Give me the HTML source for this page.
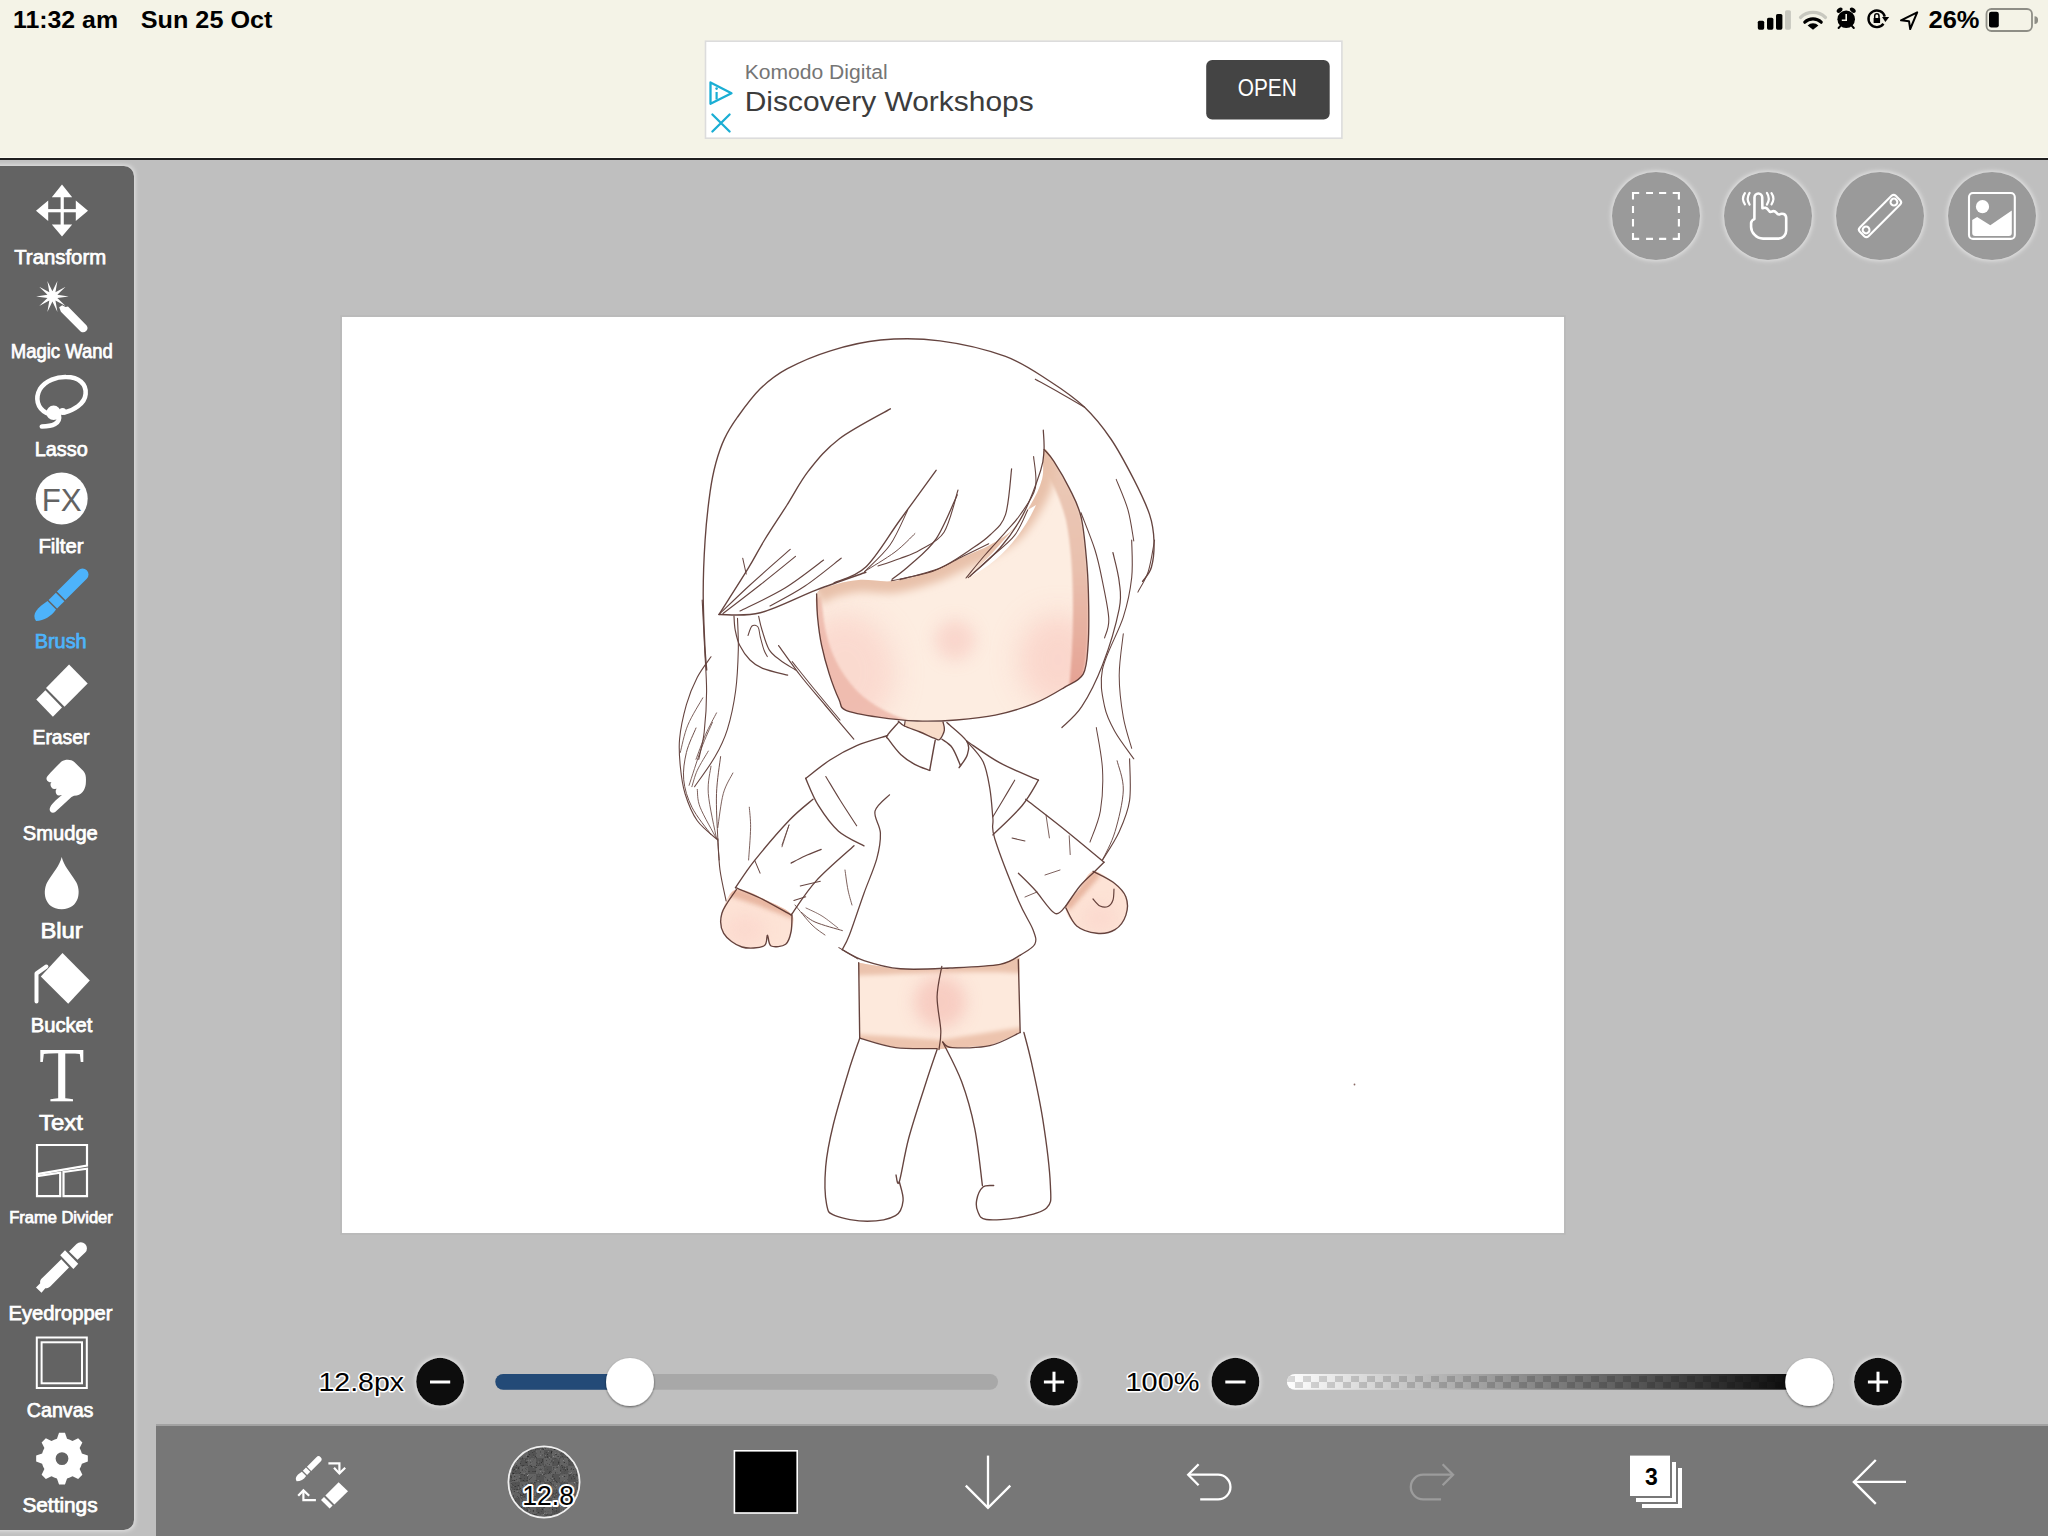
<!DOCTYPE html>
<html><head><meta charset="utf-8">
<style>
html,body{margin:0;padding:0;width:2048px;height:1536px;overflow:hidden;background:#bfbfbf;}
svg{position:absolute;left:0;top:0;display:block;}
svg{font-family:"Liberation Sans",sans-serif;}
</style></head>
<body>
<svg width="2048" height="1536" viewBox="0 0 2048 1536">
<defs>
  <filter id="halo" x="-30%" y="-30%" width="160%" height="160%">
    <feMorphology in="SourceAlpha" operator="dilate" radius="1"/>
    <feGaussianBlur stdDeviation="2"/>
    <feColorMatrix type="matrix" values="0 0 0 0 1  0 0 0 0 1  0 0 0 0 1  0 0 0 0.55 0"/>
    <feMerge><feMergeNode/><feMergeNode in="SourceGraphic"/></feMerge>
  </filter>

  <filter id="tshadow" x="-30%" y="-30%" width="160%" height="160%">
    <feGaussianBlur in="SourceAlpha" stdDeviation="1.2"/>
    <feOffset dx="0" dy="0.5"/>
    <feColorMatrix type="matrix" values="0 0 0 0 0  0 0 0 0 0  0 0 0 0 0  0 0 0 0.55 0"/>
    <feMerge><feMergeNode/><feMergeNode in="SourceGraphic"/></feMerge>
  </filter>
  <pattern id="checker" x="1287" y="1376" width="16" height="12" patternUnits="userSpaceOnUse">
    <rect width="16" height="12" fill="#ffffff"/>
    <rect x="0" y="0" width="8" height="6" fill="#d9d9d9"/>
    <rect x="8" y="6" width="8" height="6" fill="#d9d9d9"/>
  </pattern>
  <linearGradient id="opgrad" gradientUnits="userSpaceOnUse" x1="1287" y1="0" x2="1800" y2="0">
    <stop offset="0" stop-color="#000" stop-opacity="0"/>
    <stop offset="1" stop-color="#000" stop-opacity="0.97"/>
  </linearGradient>
  <filter id="noise" x="0" y="0" width="100%" height="100%">
    <feTurbulence type="fractalNoise" baseFrequency="0.9" numOctaves="2" seed="3"/>
    <feColorMatrix type="matrix" values="0 0 0 0 0.33  0 0 0 0 0.33  0 0 0 0 0.33  0.9 0.9 0.9 0 -1.15"/>
    <feComposite in2="SourceGraphic" operator="in"/>
  </filter>
  <pattern id="bpcheck" x="512" y="1450" width="16" height="16" patternUnits="userSpaceOnUse">
    <rect width="16" height="16" fill="#545454"/>
    <rect x="8" y="0" width="8" height="8" fill="#636363"/>
    <rect x="0" y="8" width="8" height="8" fill="#636363"/>
  </pattern>
  <filter id="noise2" x="0" y="0" width="100%" height="100%" filterUnits="objectBoundingBox">
    <feTurbulence type="fractalNoise" baseFrequency="0.55" numOctaves="2" seed="7" result="t"/>
    <feColorMatrix in="t" type="matrix" values="0 0 0 0 1  0 0 0 0 1  0 0 0 0 1  -3 0 0 0 0.95" result="w"/>
    <feColorMatrix in="t" type="matrix" values="0 0 0 0 0  0 0 0 0 0  0 0 0 0 0  3 0 0 0 -1.75" result="k"/>
    <feMerge><feMergeNode in="k"/><feMergeNode in="w"/></feMerge>
  </filter>
</defs>
<!-- background -->
<rect x="0" y="0" width="2048" height="1536" fill="#bfbfbf"/>
<!-- status bar -->
<rect x="0" y="0" width="2048" height="158" fill="#f4f3e7"/>
<rect x="0" y="157" width="2048" height="1" fill="#fbfaf2"/>
<rect x="0" y="158" width="2048" height="2" fill="#1f1f1f"/>


<!-- ===== STATUS BAR ===== -->
<g font-weight="bold" fill="#000" font-size="24">
  <text x="13" y="28" textLength="105" lengthAdjust="spacingAndGlyphs">11:32 am</text>
  <text x="140.8" y="28" textLength="131.6" lengthAdjust="spacingAndGlyphs">Sun 25 Oct</text>
  <text x="1928.5" y="28" textLength="51" lengthAdjust="spacingAndGlyphs">26%</text>
</g>
<g>
  <rect x="1757.8" y="20.7" width="6.4" height="9" rx="1.6" fill="#000"/>
  <rect x="1767" y="17.8" width="6.4" height="11.9" rx="1.6" fill="#000"/>
  <rect x="1776" y="13.9" width="6.4" height="15.8" rx="1.6" fill="#000"/>
  <rect x="1785" y="10.2" width="5.9" height="19.5" rx="1.6" fill="#c8c8bf"/>
  <!-- wifi -->
  <path d="M1800.5,17.5 A18,18 0 0 1 1825.5,17.5" fill="none" stroke="#c8c8bf" stroke-width="3.2" stroke-linecap="round"/>
  <path d="M1804.8,22.2 A12,12 0 0 1 1821.2,22.2" fill="none" stroke="#000" stroke-width="3.2" stroke-linecap="round"/>
  <path d="M1813,29.8 L1807.6,25.6 A7.5,7.5 0 0 1 1818.4,25.6 Z" fill="#000"/>
  <!-- alarm -->
  <circle cx="1846.2" cy="19.3" r="8.8" fill="#000"/>
  <ellipse cx="1839.6" cy="10.2" rx="3.3" ry="2.1" transform="rotate(-40 1839.6 10.2)" fill="#000"/>
  <ellipse cx="1852.8" cy="10.2" rx="3.3" ry="2.1" transform="rotate(40 1852.8 10.2)" fill="#000"/>
  <path d="M1838.6,28 L1841,25.4 M1853.8,28 L1851.4,25.4" stroke="#000" stroke-width="2" stroke-linecap="round"/>
  <path d="M1846.2,14 L1846.2,20.2 L1841.8,20.2" fill="none" stroke="#f4f3e7" stroke-width="1.6"/>
  <!-- rotation lock -->
  <path d="M1883.5,23.7 A8.3,8.3 0 1 1 1884.8,16.65" fill="none" stroke="#000" stroke-width="2.4"/>
  <path d="M1882,17.1 L1889.2,17.1 L1885.4,22 Z" fill="#000"/>
  <rect x="1873.6" y="17.9" width="6.5" height="5.1" rx="0.6" fill="#000"/>
  <path d="M1874.7,18.2 L1874.7,15.9 A2.15,2.15 0 0 1 1879,15.9 L1879,18.2" fill="none" stroke="#000" stroke-width="1.5"/>
  <!-- location -->
  <path d="M1917.2,12.3 L1901,20.3 L1909,21.2 L1910.2,29 Z" fill="none" stroke="#000" stroke-width="2" stroke-linejoin="round"/>
  <!-- battery -->
  <rect x="1986.5" y="9" width="45.5" height="22" rx="5" fill="none" stroke="#8e8e86" stroke-width="1.8"/>
  <rect x="1989" y="11.8" width="9.8" height="15.8" rx="2.3" fill="#000"/>
  <path d="M2034.5,16.2 A3.5,3.8 0 0 1 2034.5,24 Z" fill="#8e8e86"/>
</g>

<!-- ===== AD BANNER ===== -->
<rect x="705.5" y="41.2" width="636.4" height="97" fill="#ffffff" stroke="#dcdcdc" stroke-width="1.6"/>
<text x="744.7" y="79" font-size="20" fill="#757575" textLength="143" lengthAdjust="spacingAndGlyphs">Komodo Digital</text>
<text x="744.7" y="111.3" font-size="28" fill="#3c3c3c" textLength="289" lengthAdjust="spacingAndGlyphs">Discovery Workshops</text>
<rect x="1206.2" y="59.9" width="123.5" height="59.7" rx="6" fill="#444444"/>
<text x="1267.3" y="96.4" font-size="23" fill="#ffffff" text-anchor="middle" textLength="59" lengthAdjust="spacingAndGlyphs">OPEN</text>
<g fill="none" stroke="#1aaed4" stroke-width="2.3" stroke-linejoin="round" stroke-linecap="round">
  <path d="M710.5,82.5 L731.5,93.2 L710.5,103.8 Z"/>
  <path d="M712.4,114.5 L729.6,131.5 M729.6,114.5 L712.4,131.5"/>
</g>
<path d="M716.6,92 L716.6,99.5" stroke="#1aaed4" stroke-width="2.2"/>
<circle cx="716.6" cy="88.6" r="1.3" fill="#1aaed4"/>

<!-- left toolbar -->
<rect x="-20" y="166" width="154" height="1364" rx="10" fill="#636363" filter="url(#halo)"/>


<!-- ===== LEFT TOOLBAR ICONS ===== -->
<g fill="#ffffff">
  <!-- transform -->
  <path d="M62,184.6 L51.8,197.2 L72.2,197.2 Z M62,236.6 L51.8,224.4 L72.2,224.4 Z M36,210.7 L48.2,200.5 L48.2,220.9 Z M88,210.7 L75.8,200.5 L75.8,220.9 Z"/>
  <rect x="60.6" y="196" width="3.2" height="30"/>
  <rect x="47" y="209.1" width="30" height="3.2"/>
  <!-- magic wand -->
  <path d="M68.70,296.40 L57.35,294.79 L65.59,286.82 L55.46,292.19 L57.44,280.90 L52.40,291.20 L47.36,280.90 L49.34,292.19 L39.21,286.82 L47.45,294.79 L36.10,296.40 L47.45,298.01 L39.21,305.98 L49.34,300.61 L47.36,311.90 L52.40,301.60 L57.44,311.90 L55.46,300.61 L65.59,305.98 L57.35,298.01 Z"/>
  <path d="M59.2,307.2 L62.2,305.2 L65.5,306.9 L68,306.5 L86.6,325.4 A4.3,4.3 0 0 1 80.6,331.4 L60.9,311.8 Z"/>
  <!-- lasso -->
  <g fill="none" stroke="#fff" stroke-width="4.6" stroke-linecap="round">
    <path d="M46.5,413 C37,408 35,398 40,389 C46,380 57,376.8 66,377 C79,377 86.5,384 85.6,394 C84.8,404 73,410.5 64.5,412.5"/>
    <path d="M58.8,414.5 C61,424 52,426.2 41.8,426.5"/>
  </g>
  <circle cx="53.6" cy="412.8" r="7.2"/>
  <circle cx="62.6" cy="411.5" r="3.6"/>
  <!-- filter FX -->
  <circle cx="61.7" cy="498.6" r="26"/>
  <text x="61.7" y="510.5" font-size="31" text-anchor="middle" fill="#636363" textLength="40" lengthAdjust="spacingAndGlyphs">FX</text>
  <!-- brush (blue) -->
  <g transform="translate(36,621) rotate(-45)" fill="#4db3fb">
    <path d="M0,0 C1.5,-8.5 11,-8.2 22.3,-6 L22.3,6 C14,7.5 6,5.5 0,0 Z"/>
    <rect x="23.8" y="-6" width="10.3" height="12"/>
    <path d="M35.6,-6 L65.8,-6 A6,6 0 0 1 65.8,6 L35.6,6 Z"/>
  </g>
  <!-- eraser -->
  <path d="M69.05,664.4 L87.7,683.6 L64.5,706.8 L46,687.9 Z"/>
  <path d="M45.4,690.2 L62,707.5 L52.9,716.8 L36.25,699.5 Z"/>
  <!-- smudge hand -->
  <path d="M47.6,776 C52,771 57,765.5 61.5,761.6 C65,759.2 71,759 74.3,762 L83.4,771 C86.6,774.5 86,780 85.8,784 C85,790 82,795.5 74,795.7 L71.5,797 L55.5,811.8 C52.5,814 48,812 50.3,807 C52,803.5 58,798 62,795 L59,795.6 C55.5,795.5 54.8,790 56.8,788.8 L54,789 C50.5,788.5 49.5,783.5 51.5,782.2 L49.5,782.2 C46.5,781.5 45.5,778 47.6,776 Z"/>
  <!-- blur drop -->
  <path d="M61.7,857 C64,866 70,872 75.5,881 C81.5,890 80,909 61.7,909.2 C43.5,909 42,890 48,881 C53.5,872 59.5,866 61.7,857 Z"/>
  <!-- bucket -->
  <path d="M62.5,953 L89.8,980.4 L68.2,1003.8 L40.8,976.5 Z"/>
  <path d="M46.4,966.5 L36.5,973.5 L36.5,1001.5" fill="none" stroke="#fff" stroke-width="4" stroke-linecap="round" stroke-linejoin="round"/>
  <!-- text T -->
  <text x="61.8" y="1101" style="font-family:'Liberation Serif',serif" font-size="78" text-anchor="middle" textLength="45.5" lengthAdjust="spacingAndGlyphs">T</text>
  <!-- frame divider -->
  <g fill="none" stroke="#fff" stroke-width="2.2">
    <path d="M37,1145 L87,1145 L87,1165.6 L37,1174.2 Z"/>
    <path d="M37,1176.2 L60.2,1172.7 L60.2,1196.2 L37,1196.2 Z"/>
    <path d="M63.5,1172 L87,1168.7 L87,1196.2 L63.5,1196.2 Z"/>
  </g>
  <!-- eyedropper -->
  <path d="M69.05,1251.4 L76.5,1244 A6.1,6.1 0 0 1 85.2,1252.6 L77.5,1259.8 Z"/>
  <path d="M60.2,1255.2 L65,1250.2 L78.2,1263.7 L73.4,1268.9 Z"/>
  <path d="M61.3,1259.3 L69,1267.5 L50.5,1286.2 C49.5,1287.3 47,1288.4 45.3,1288.3 L41.5,1292.8 L36,1287.4 L40.2,1283.3 C39.8,1281 40.5,1279.5 42,1278.3 Z"/>
  <!-- canvas -->
  <rect x="36.8" y="1337.5" width="50" height="50.5" fill="none" stroke="#fff" stroke-width="2"/>
  <rect x="41.6" y="1342.3" width="40.4" height="41" fill="none" stroke="#fff" stroke-width="2"/>
  <!-- settings gear -->
  <path fill-rule="evenodd" d="M80.94,1450.75 L81.87,1453.56 L87.83,1455.62 L87.83,1461.58 L81.87,1463.64 L80.94,1466.45 L79.61,1469.09 L82.37,1474.76 L78.16,1478.97 L72.49,1476.21 L69.85,1477.54 L67.04,1478.47 L64.98,1484.43 L59.02,1484.43 L56.96,1478.47 L54.15,1477.54 L51.51,1476.21 L45.84,1478.97 L41.63,1474.76 L44.39,1469.09 L43.06,1466.45 L42.13,1463.64 L36.17,1461.58 L36.17,1455.62 L42.13,1453.56 L43.06,1450.75 L44.39,1448.11 L41.63,1442.44 L45.84,1438.23 L51.51,1440.99 L54.15,1439.66 L56.96,1438.73 L59.02,1432.77 L64.98,1432.77 L67.04,1438.73 L69.85,1439.66 L72.49,1440.99 L78.16,1438.23 L82.37,1442.44 L79.61,1448.11 Z M68.4,1458.6 A6.4,6.4 0 1 0 55.6,1458.6 A6.4,6.4 0 1 0 68.4,1458.6 Z"/>
</g>
<!-- labels -->
<g fill="#ffffff" text-anchor="middle" font-size="20" stroke="#ffffff" stroke-width="0.75">
  <text x="60.2" y="264.4" textLength="92" lengthAdjust="spacingAndGlyphs">Transform</text>
  <text x="61.8" y="358.2" textLength="102" lengthAdjust="spacingAndGlyphs">Magic Wand</text>
  <text x="61.2" y="456" textLength="53" lengthAdjust="spacingAndGlyphs">Lasso</text>
  <text x="61" y="552.6" textLength="45" lengthAdjust="spacingAndGlyphs">Filter</text>
  <text x="60.7" y="648.4" textLength="52" lengthAdjust="spacingAndGlyphs" fill="#4db3fb" stroke="#4db3fb">Brush</text>
  <text x="61" y="744" textLength="57" lengthAdjust="spacingAndGlyphs">Eraser</text>
  <text x="60.3" y="840" textLength="75" lengthAdjust="spacingAndGlyphs">Smudge</text>
  <text x="61.6" y="938" font-size="22" textLength="42.4" lengthAdjust="spacingAndGlyphs">Blur</text>
  <text x="61.6" y="1032.4" textLength="61.7" lengthAdjust="spacingAndGlyphs">Bucket</text>
  <text x="61" y="1130" font-size="22" textLength="43.8" lengthAdjust="spacingAndGlyphs">Text</text>
  <text x="61" y="1222.6" font-size="16.5" textLength="103.6" lengthAdjust="spacingAndGlyphs">Frame Divider</text>
  <text x="60.5" y="1320" textLength="104" lengthAdjust="spacingAndGlyphs">Eyedropper</text>
  <text x="60.1" y="1416.6" textLength="66.6" lengthAdjust="spacingAndGlyphs">Canvas</text>
  <text x="60" y="1512" textLength="75.2" lengthAdjust="spacingAndGlyphs">Settings</text>
</g>

<!-- ===== TOP RIGHT BUTTONS ===== -->
<g filter="url(#halo)">
  <circle cx="1656" cy="216" r="44" fill="#9a9a9a"/>
  <circle cx="1768" cy="216" r="44" fill="#9a9a9a"/>
  <circle cx="1880" cy="216" r="44" fill="#9a9a9a"/>
  <circle cx="1992" cy="216" r="44" fill="#9a9a9a"/>
</g>
<g stroke="#fff" stroke-width="2.1" fill="none">
  <path d="M1639.2,193 L1633,193 L1633,199.4 M1646.1,193 L1653,193 M1659.1,193 L1666.2,193 M1672.7,193 L1678.9,193 L1678.9,199.4 M1633,205.9 L1633,212.9 M1633,219.1 L1633,226.4 M1678.9,205.9 L1678.9,212.9 M1678.9,219.1 L1678.9,226.4 M1633,232.9 L1633,238.9 L1639.2,238.9 M1646.1,238.9 L1653,238.9 M1659.1,238.9 L1666.2,238.9 M1672.7,238.9 L1678.9,238.9 L1678.9,232.9"/>
</g>
<g stroke="#fff" stroke-width="2.6" fill="none" stroke-linecap="round" stroke-linejoin="round">
  <path d="M1754.4,219.1 L1754.5,197.3 A3.85,3.85 0 0 1 1762.2,197.3 L1762.4,208.3 C1764.5,207.2 1767,207.6 1768.2,209.8 C1769,211.2 1770,212 1771.2,211.8 C1773,210.8 1775,211 1776.2,212.6 C1777.2,214 1778.2,214.8 1779.4,214.5 C1781.8,212.9 1786.2,213.8 1786.2,218 L1786.2,230.5 C1786.2,235 1783,238.6 1778.7,238.6 L1763.1,238.6 C1756,238.6 1751.1,232 1751.1,226.9 L1751.1,223 C1751.3,221 1752.5,219.8 1754.4,219.1 Z"/>
  <path stroke-width="2.2" d="M1744.9,193.2 C1742.3,197 1742.3,200.5 1744.9,204.3"/>
  <path stroke-width="2.2" d="M1749.6,192.8 C1747.2,196.5 1747.2,200.8 1749.6,204.6"/>
  <path stroke-width="2.2" d="M1766.9,192.8 C1769.3,196.5 1769.3,200.8 1766.9,204.6"/>
  <path stroke-width="2.2" d="M1771.5,193.2 C1774.1,197 1774.1,200.5 1771.5,204.3"/>
</g>
<g transform="translate(1880,216) rotate(-45)" stroke="#fff" stroke-width="2.1" fill="none">
  <rect x="-25.4" y="-6.1" width="50.8" height="12.2" rx="3"/>
  <circle cx="-19.7" cy="0" r="3.4"/>
  <circle cx="19.7" cy="0" r="3.4"/>
</g>
<rect x="1969" y="193" width="45.8" height="45.9" rx="4" stroke="#fff" stroke-width="2.1" fill="none"/>
<circle cx="1982.5" cy="206.7" r="6.6" fill="#fff"/>
<path d="M1972.2,219.9 L1977.1,216.9 L1990.3,225.2 L2011.8,210.6 L2011.8,233 A3,3 0 0 1 2008.8,236 L1975.2,236 A3,3 0 0 1 1972.2,233 Z" fill="#fff"/>

<!-- canvas -->
<rect x="341" y="316" width="1224" height="918" fill="none" stroke="#b4b4b4" stroke-width="1.2" opacity="0.7"/>
<rect x="342" y="317" width="1222" height="916" fill="#ffffff"/>
<!-- DRAWING START -->
<defs>
<clipPath id="faceclip"><path d="M816.6,594.0 C814.7,599.2 816.8,609.0 817.6,617.5 C818.4,626.0 819.5,635.4 821.5,644.8 C823.5,654.2 826.4,665.0 829.3,674.1 C832.2,683.2 836.2,693.5 839.0,699.5 C841.8,705.5 839.4,707.4 845.9,710.3 C852.4,713.2 866.2,715.3 878.1,717.1 C890.0,718.9 904.2,720.5 917.2,721.0 C930.2,721.5 943.3,721.0 956.3,720.0 C969.3,719.0 982.3,718.0 995.3,715.2 C1008.3,712.4 1023.0,708.0 1034.4,703.4 C1045.8,698.8 1055.6,692.7 1063.7,687.8 C1071.8,682.9 1079.1,681.3 1083.2,674.1 C1087.3,666.9 1087.2,656.2 1088.1,644.8 C1089.0,633.4 1088.9,618.8 1088.7,605.8 C1088.5,592.8 1088.3,581.4 1087.1,566.7 C1085.9,552.1 1084.2,530.9 1081.3,517.9 C1078.4,504.9 1074.1,498.0 1069.5,488.6 C1064.9,479.2 1058.1,467.8 1053.9,461.3 C1049.7,454.8 1046.0,446.6 1044.1,449.5 C1042.1,452.4 1044.5,469.6 1042.2,478.8 C1039.9,488.1 1035.5,496.5 1030.5,505.0 C1025.5,513.5 1018.8,523.3 1012.0,530.0 C1005.2,536.7 998.2,540.5 990.0,545.0 C981.8,549.5 972.7,552.7 963.0,557.0 C953.3,561.3 943.5,567.0 932.0,571.0 C920.5,575.0 906.0,579.5 893.8,581.0 C881.6,582.5 869.4,579.1 858.6,580.0 C847.9,580.9 836.3,584.0 829.3,586.3 C822.3,588.6 818.5,588.8 816.6,594.0 Z"/></clipPath>
<clipPath id="legclip"><path d="M858.7,962.7 C858.7,962.7 895.5,968.8 895.5,968.8 C895.5,968.8 940.8,969.5 940.8,969.5 C940.8,969.5 980.5,966.5 980.5,966.5 C980.5,966.5 1001.0,964.0 1001.0,964.0 C1001.0,964.0 1019.5,957.5 1019.5,957.5 C1019.5,957.5 1019.5,1000.0 1019.5,1000.0 C1019.5,1000.0 1020.2,1032.5 1020.2,1032.5 C1020.2,1032.5 989.9,1045.7 989.9,1045.7 C989.9,1045.7 952.2,1047.6 952.2,1047.6 C952.2,1047.6 939.0,1049.5 939.0,1049.5 C939.0,1049.5 895.5,1047.6 895.5,1047.6 C895.5,1047.6 859.7,1038.2 859.7,1038.2 C859.7,1038.2 859.0,1000.0 859.0,1000.0 C859.0,1000.0 858.7,962.7 858.7,962.7 Z"/></clipPath>
<filter id="b8" x="-50%" y="-50%" width="200%" height="200%"><feGaussianBlur stdDeviation="8"/></filter>
<filter id="b1" x="-50%" y="-50%" width="200%" height="200%"><feGaussianBlur stdDeviation="1"/></filter>
<filter id="b2" x="-50%" y="-50%" width="200%" height="200%"><feGaussianBlur stdDeviation="2"/></filter>
<filter id="b4" x="-50%" y="-50%" width="200%" height="200%"><feGaussianBlur stdDeviation="4"/></filter>
<filter id="b14" x="-50%" y="-50%" width="200%" height="200%"><feGaussianBlur stdDeviation="14"/></filter>
</defs>
<linearGradient id="rband" x1="0" y1="450" x2="0" y2="690" gradientUnits="userSpaceOnUse"><stop offset="0" stop-color="#ebcab7"/><stop offset="0.5" stop-color="#e9c0ae"/><stop offset="1" stop-color="#e5a193"/></linearGradient>
<g clip-path="url(#faceclip)">
<rect x="800" y="420" width="300" height="320" fill="#fdede1"/>
<ellipse cx="845" cy="672" rx="50" ry="58" fill="#f9cdc4" filter="url(#b14)" opacity="0.6"/>
<ellipse cx="1058" cy="660" rx="40" ry="46" fill="#f9c9c0" filter="url(#b14)" opacity="0.62"/>
<path d="M1040,440 L1044.1,449.5 C1060,468 1075,495 1081.3,517.9 C1086,545 1088.7,580 1088.7,605.8 C1089,640 1086,665 1083.2,674.1 L1090,700 L1068,700 C1071,670 1073,640 1073,610 C1073,575 1071,545 1066,520 C1060,498 1052,480 1040,462 Z" fill="url(#rband)" filter="url(#b1)"/>
<path d="M810,600 C811,650 824,692 846,714 C870,722 900,724 918,724 C895,717 872,706 857,691 C840,673 828,650 824,622 L821,596 Z" fill="#ebb2a4" filter="url(#b1)" opacity="0.75"/>
<path d="M1044.1,449.5 C1043.8,454.4 1044.5,469.6 1042.2,478.8 C1039.9,488.1 1035.5,496.5 1030.5,505.0 C1025.5,513.5 1018.8,523.3 1012.0,530.0 C1005.2,536.7 998.2,540.5 990.0,545.0 C981.8,549.5 972.7,552.7 963.0,557.0 C953.3,561.3 943.5,567.0 932.0,571.0 C920.5,575.0 906.0,579.5 893.8,581.0 C881.6,582.5 869.4,579.1 858.6,580.0 C847.9,580.9 836.3,584.0 829.3,586.3 C822.3,588.6 818.7,592.7 816.6,594.0" fill="none" stroke="#e8c1aa" stroke-width="24" filter="url(#b4)"/>
<ellipse cx="955" cy="640" rx="20" ry="20" fill="#f8cdc4" filter="url(#b8)" opacity="0.7"/>
</g>
<path d="M968.2,577.7 C985,562 1008,537 1027.7,510 L1036,505 C1020,540 995,565 968.2,577.7 Z" fill="#ffffff"/>
<path d="M905.1,721.2 C905.1,721.2 943.4,721.9 943.4,721.9 C943.4,721.9 944.8,730.8 944.8,730.8 C944.8,730.8 940.0,739.0 940.0,739.0 C940.0,739.0 935.2,738.6 935.2,738.6 C935.2,738.6 904.4,726.0 904.4,726.0 C904.4,726.0 905.1,721.2 905.1,721.2 Z" fill="#f8dcc9"/>
<g clip-path="url(#legclip)">
<rect x="850" y="950" width="180" height="110" fill="#fde9dc"/>
<path d="M850,950 L1030,950 L1030,974 C990,970 900,974 850,976 Z" fill="#ebc3ad" filter="url(#b2)"/>
<path d="M850,1034 C890,1036 920,1038 940,1040 C970,1036 1000,1030 1030,1026 L1030,1060 L850,1060 Z" fill="#edc4ae" filter="url(#b2)"/>
<ellipse cx="940" cy="1002" rx="26" ry="26" fill="#f6c6bc" filter="url(#b8)" opacity="0.8"/>
</g>
<path d="M736.4,889.5 C728.4,891.4 724.0,905.9 721.9,913.2 C719.8,920.5 720.4,927.7 723.7,933.3 C727.0,938.9 735.2,944.9 741.9,947.0 C748.6,949.1 759.5,948.0 763.8,946.0 C768.0,944.0 766.2,935.1 767.4,935.1 C768.6,935.1 768.0,944.5 771.1,946.0 C774.2,947.5 782.4,946.6 785.7,944.2 C789.0,941.8 790.1,936.4 791.1,931.5 C792.1,926.6 795.5,919.9 792.0,915.0 C788.5,910.1 779.3,906.2 770.0,902.0 C760.7,897.8 744.4,887.6 736.4,889.5 Z" fill="#fde3d6"/>
<path d="M1093.1,871.3 C1098.6,870.3 1107.7,878.0 1113.2,882.3 C1118.7,886.6 1123.8,891.4 1125.9,896.9 C1128.0,902.4 1127.7,909.6 1125.9,915.1 C1124.1,920.6 1119.8,926.7 1115.0,929.7 C1110.2,932.7 1103.2,933.9 1096.8,933.3 C1090.4,932.7 1081.9,930.2 1076.7,926.0 C1071.5,921.8 1065.2,914.1 1065.8,907.8 C1066.3,901.5 1075.5,894.1 1080.0,888.0 C1084.5,881.9 1087.6,872.2 1093.1,871.3 Z" fill="#fde3d6"/>
<clipPath id="lhclip"><path d="M736.4,889.5 C728.4,891.4 724.0,905.9 721.9,913.2 C719.8,920.5 720.4,927.7 723.7,933.3 C727.0,938.9 735.2,944.9 741.9,947.0 C748.6,949.1 759.5,948.0 763.8,946.0 C768.0,944.0 766.2,935.1 767.4,935.1 C768.6,935.1 768.0,944.5 771.1,946.0 C774.2,947.5 782.4,946.6 785.7,944.2 C789.0,941.8 790.1,936.4 791.1,931.5 C792.1,926.6 795.5,919.9 792.0,915.0 C788.5,910.1 779.3,906.2 770.0,902.0 C760.7,897.8 744.4,887.6 736.4,889.5 Z"/></clipPath>
<clipPath id="rhclip"><path d="M1093.1,871.3 C1098.6,870.3 1107.7,878.0 1113.2,882.3 C1118.7,886.6 1123.8,891.4 1125.9,896.9 C1128.0,902.4 1127.7,909.6 1125.9,915.1 C1124.1,920.6 1119.8,926.7 1115.0,929.7 C1110.2,932.7 1103.2,933.9 1096.8,933.3 C1090.4,932.7 1081.9,930.2 1076.7,926.0 C1071.5,921.8 1065.2,914.1 1065.8,907.8 C1066.3,901.5 1075.5,894.1 1080.0,888.0 C1084.5,881.9 1087.6,872.2 1093.1,871.3 Z"/></clipPath>
<g clip-path="url(#lhclip)"><path d="M730,886 C760,894 780,904 796,912 L796,920 C770,910 750,902 728,896 Z" fill="#e6b29c" filter="url(#b2)" opacity="0.9"/><ellipse cx="745" cy="930" rx="20" ry="16" fill="#fbd4ca" filter="url(#b8)" opacity="0.6"/></g>
<g clip-path="url(#rhclip)"><path d="M1095,868 L1080,886 L1062,906 L1070,910 L1086,892 L1100,876 Z" fill="#e6b29c" filter="url(#b2)" opacity="0.9"/><ellipse cx="1100" cy="918" rx="18" ry="14" fill="#fbd4ca" filter="url(#b8)" opacity="0.6"/></g>
<circle cx="1354.5" cy="1084.5" r="0.9" fill="#8a6a66"/>
<g fill="none" stroke="#55302b" stroke-linecap="round" stroke-linejoin="round" opacity="0.9">
<path d="M706.7,670.0 C706.4,666.0 705.5,658.9 704.9,646.1 C704.3,633.3 703.2,611.1 703.2,593.4 C703.2,575.7 704.0,556.9 705.1,540.0 C706.2,523.1 708.3,504.7 710.1,491.9 C711.9,479.1 713.4,472.1 715.8,463.3 C718.2,454.5 720.8,446.5 724.4,438.9 C728.0,431.2 731.3,425.8 737.3,417.4 C743.3,409.0 751.9,396.9 760.2,388.8 C768.6,380.7 775.7,375.0 787.4,368.7 C799.1,362.4 814.9,355.6 830.4,350.8 C845.9,346.0 862.3,341.7 880.6,340.0 C898.9,338.3 919.2,338.1 940.0,340.8 C960.8,343.5 987.3,349.7 1005.5,356.4 C1023.7,363.1 1036.2,372.5 1049.4,381.0 C1062.6,389.5 1074.3,397.6 1084.6,407.3 C1094.8,417.0 1102.7,427.0 1110.9,439.0 C1119.1,451.0 1127.3,466.8 1133.8,479.4 C1140.2,492.0 1146.2,504.3 1149.6,514.6 C1153.0,524.9 1153.7,532.2 1154.0,541.0 C1154.3,549.8 1153.3,560.6 1151.4,567.3 C1149.5,574.0 1144.1,579.0 1142.6,581.4" stroke-width="1.36"/>
<path d="M1035.3,379.2 C1039.4,381.5 1051.8,388.3 1060.0,393.0 C1068.2,397.7 1080.5,404.9 1084.6,407.3" stroke-width="1.10"/>
<path d="M890.4,408.8 C881.9,413.8 853.0,428.4 839.4,438.7 C825.8,449.0 817.7,459.3 808.9,470.4 C800.1,481.5 794.1,493.9 786.7,505.5 C779.3,517.1 771.0,529.5 764.5,540.0 C758.0,550.5 755.6,556.3 748.0,568.7 C740.4,581.1 723.8,606.9 719.0,614.5" stroke-width="1.36"/>
<path d="M719.0,614.5 C725.9,614.2 744.0,616.8 760.3,612.7 C776.6,608.6 799.0,596.5 816.6,589.8 C834.2,583.1 857.6,575.2 865.8,572.3" stroke-width="1.44"/>
<path d="M719.0,614.5 C724.2,609.6 738.1,595.9 750.0,585.0 C761.9,574.1 783.5,555.3 790.2,549.4" stroke-width="1.10"/>
<path d="M723.0,613.5 C729.2,608.8 747.9,594.5 760.0,585.0 C772.1,575.5 789.6,561.2 795.5,556.4" stroke-width="1.10"/>
<path d="M740.0,611.0 C747.5,607.2 771.1,596.5 785.0,588.0 C798.9,579.5 817.2,564.7 823.6,560.0" stroke-width="1.10"/>
<path d="M770.0,606.0 C775.8,602.7 793.1,594.0 805.0,586.0 C816.9,578.0 835.2,562.8 841.2,558.2" stroke-width="1.10"/>
<path d="M936.1,470.3 C930.1,478.6 911.7,503.9 900.0,520.0 C888.3,536.1 876.8,556.5 865.8,567.0 C854.8,577.5 839.4,580.2 834.1,582.8" stroke-width="1.36"/>
<path d="M957.2,494.9 C953.7,502.2 944.0,527.2 936.1,538.9 C928.2,550.6 917.3,558.3 910.0,565.0 C902.7,571.7 895.1,576.9 892.1,579.3" stroke-width="1.27"/>
<path d="M1043.3,430.2 C1043.4,433.5 1044.5,443.3 1044.0,450.0 C1043.5,456.7 1044.1,459.8 1040.6,470.6 C1037.1,481.4 1029.8,501.7 1023.0,514.6 C1016.2,527.5 1008.8,537.8 1000.0,548.0 C991.2,558.2 975.2,571.4 970.3,576.1" stroke-width="1.27"/>
<path d="M1033.6,456.6 C1033.9,461.9 1037.6,478.5 1035.3,488.2 C1033.0,497.9 1025.0,507.7 1020.0,515.0 C1015.0,522.3 1011.3,525.5 1005.5,532.2 C999.7,538.9 991.6,547.4 985.0,555.0 C978.4,562.6 969.2,574.2 966.0,578.0" stroke-width="1.10"/>
<path d="M1011.6,468.9 C1010.6,476.5 1009.1,503.6 1005.5,514.6 C1001.9,525.6 995.9,529.1 990.0,535.0 C984.1,540.9 978.6,544.2 970.3,549.7 C962.0,555.2 951.7,563.0 940.0,568.0 C928.3,573.0 906.7,577.7 900.0,579.6" stroke-width="1.19"/>
<path d="M958.0,490.0 C955.7,497.0 950.3,522.2 944.0,532.2 C937.7,542.2 927.3,545.6 920.0,550.0 C912.7,554.4 907.0,555.8 900.0,558.5 C893.0,561.2 881.7,564.8 878.0,566.0" stroke-width="1.10"/>
<path d="M742.7,558.2 L746.2,574.0" stroke-width="1.02"/>
<path d="M968.2,577.7 C971.8,574.4 982.3,565.0 990.0,558.0 C997.7,551.0 1008.1,543.6 1014.4,535.6 C1020.7,527.6 1025.5,514.3 1027.7,510.0" stroke-width="1.02"/>
<path d="M891.3,580.8 C898.1,579.2 920.3,575.6 932.3,571.5 C944.2,567.4 953.6,560.8 963.0,556.2 C972.4,551.6 984.4,545.9 988.7,543.8" stroke-width="1.10"/>
<path d="M864.6,571.5 C868.8,567.1 882.8,555.2 890.0,545.0 C897.2,534.8 904.8,515.8 907.7,510.0" stroke-width="1.02"/>
<path d="M864.6,571.5 C869.7,568.2 886.6,558.3 895.0,552.0 C903.4,545.7 911.6,536.7 914.9,533.6" stroke-width="0.94"/>
<path d="M734.0,616.2 C734.2,618.5 734.2,625.1 735.2,630.0 C736.2,634.9 737.3,640.6 739.8,645.6 C742.3,650.6 746.2,656.2 750.0,660.0 C753.8,663.8 756.3,665.9 762.6,668.4 C768.9,670.9 783.5,674.1 787.7,675.2" stroke-width="1.19"/>
<path d="M748.0,635.5 C748.7,633.9 750.3,627.4 752.0,626.0 C753.7,624.6 756.6,625.2 758.0,627.0 C759.4,628.8 759.3,633.2 760.3,637.0 C761.3,640.8 762.8,646.7 764.0,650.0 C765.2,653.3 766.8,655.5 767.3,656.6" stroke-width="1.02"/>
<path d="M758.6,616.2 C759.2,618.5 760.2,624.4 762.0,630.0 C763.8,635.6 766.1,644.6 769.1,649.6 C772.1,654.6 775.6,656.6 780.0,660.0 C784.4,663.4 792.9,668.3 795.5,670.0" stroke-width="1.10"/>
<path d="M778.6,645.6 C782.2,650.5 792.3,665.1 800.0,675.0 C807.7,684.9 816.0,694.3 825.0,705.0 C834.0,715.7 849.0,733.4 853.8,739.1" stroke-width="1.19"/>
<path d="M792.2,661.6 C796.0,666.3 807.0,680.3 815.0,690.0 C823.0,699.7 835.8,715.0 840.0,720.0" stroke-width="1.02"/>
<path d="M702.2,600.0 C702.6,607.6 703.8,630.4 704.5,645.6 C705.2,660.8 706.6,676.6 706.6,691.0 C706.6,705.4 705.5,720.6 704.2,732.0 C702.9,743.4 699.6,754.8 698.7,759.3" stroke-width="1.10"/>
<path d="M717.8,838.6 C718.2,843.8 718.6,859.6 720.0,870.0 C721.4,880.4 725.1,895.8 726.1,900.9" stroke-width="1.10"/>
<path d="M711.0,656.8 C708.7,660.2 701.4,669.3 697.3,677.3 C693.2,685.3 689.3,694.5 686.4,704.7 C683.5,715.0 680.6,728.5 679.6,738.8 C678.6,749.0 679.4,757.1 680.3,766.2 C681.2,775.3 682.2,784.4 685.0,793.5 C687.8,802.6 691.8,813.0 697.3,820.8 C702.8,828.5 714.4,836.8 717.8,840.0" stroke-width="1.10"/>
<path d="M702.8,697.8 C700.3,702.4 691.5,716.1 687.8,725.2 C684.0,734.3 681.5,748.0 680.3,752.5" stroke-width="0.85"/>
<path d="M696.0,728.0 C694.4,732.1 688.4,743.9 686.4,752.5 C684.4,761.1 682.8,770.7 683.7,779.8 C684.6,788.9 687.4,798.1 691.9,807.2 C696.4,816.3 707.8,830.0 711.0,834.5" stroke-width="0.94"/>
<path d="M737.5,618.2 C737.6,623.5 738.6,637.9 738.3,650.0 C738.0,662.1 737.4,677.8 735.6,691.0 C733.8,704.2 730.8,718.4 727.4,729.3 C724.0,740.2 720.6,747.0 715.1,756.6 C709.6,766.2 698.0,781.7 694.6,786.7" stroke-width="1.10"/>
<path d="M716.5,712.9 C714.7,716.5 708.9,727.0 705.5,734.7 C702.1,742.4 697.6,755.2 696.0,759.3" stroke-width="0.85"/>
<path d="M712.4,722.4 C710.6,726.7 705.3,737.9 701.4,748.4 C697.5,758.9 691.1,779.1 689.1,785.3" stroke-width="0.85"/>
<path d="M708.3,751.1 C706.5,754.3 700.0,764.4 697.3,770.3 C694.6,776.2 692.8,784.0 691.9,786.7" stroke-width="0.85"/>
<path d="M697.3,789.4 C697.8,792.4 696.9,799.0 700.1,807.2 C703.3,815.4 713.8,833.4 716.5,838.6" stroke-width="0.85"/>
<path d="M711.0,766.2 C710.5,770.8 707.4,781.4 708.3,793.5 C709.2,805.6 715.1,831.1 716.5,838.6" stroke-width="0.85"/>
<path d="M720.6,756.6 C719.9,762.8 717.0,779.8 716.5,793.5 C716.0,807.2 717.3,827.5 717.8,838.6 C718.2,849.7 719.0,856.4 719.2,860.0" stroke-width="0.94"/>
<path d="M732.9,773.0 C731.3,776.4 725.8,784.4 723.3,793.5 C720.8,802.6 718.7,822.0 717.8,827.7" stroke-width="0.85"/>
<path d="M749.3,807.2 C749.5,810.6 750.7,818.9 750.6,827.7 C750.5,836.5 748.9,854.6 748.6,860.0" stroke-width="0.85"/>
<path d="M789.0,825.0 L782.0,846.8" stroke-width="0.85"/>
<path d="M801.4,912.4 C803.7,914.0 808.2,919.0 815.0,922.0 C821.8,925.0 837.8,929.2 842.4,930.6" stroke-width="0.94"/>
<path d="M795.0,905.0 C797.8,908.3 807.0,920.0 812.0,925.0 C817.0,930.0 822.8,933.3 825.0,935.0" stroke-width="0.85"/>
<path d="M806.0,908.0 C808.7,909.3 816.7,912.7 822.0,916.0 C827.3,919.3 835.3,926.0 838.0,928.0" stroke-width="0.77"/>
<path d="M1081.0,512.8 C1083.3,519.0 1091.4,538.5 1095.0,550.0 C1098.6,561.5 1100.2,570.2 1102.5,581.7 C1104.8,593.2 1108.5,609.8 1108.8,619.2 C1109.1,628.6 1105.3,634.8 1104.6,637.9" stroke-width="1.10"/>
<path d="M1112.9,552.5 C1114.0,557.4 1118.2,572.3 1119.2,581.7 C1120.2,591.1 1122.0,594.9 1119.2,608.8 C1116.4,622.7 1108.8,648.7 1102.5,665.0 C1096.2,681.3 1088.5,696.3 1081.7,706.7 C1074.9,717.1 1065.2,724.0 1061.9,727.5" stroke-width="1.19"/>
<path d="M1131.7,540.0 C1131.7,546.2 1133.1,564.6 1131.7,577.5 C1130.3,590.4 1128.2,601.8 1123.3,617.1 C1118.4,632.4 1105.6,654.3 1102.5,669.2 C1099.4,684.1 1102.5,696.3 1104.6,706.7 C1106.7,717.1 1110.1,723.0 1115.0,731.7 C1119.9,740.4 1130.7,754.3 1133.8,758.8" stroke-width="1.10"/>
<path d="M1154.6,540.0 C1153.5,545.2 1151.1,562.6 1148.3,571.3 C1145.5,580.0 1139.6,588.6 1137.9,592.1" stroke-width="1.02"/>
<path d="M1123.3,633.8 C1122.6,640.7 1119.2,661.5 1119.2,675.4 C1119.2,689.3 1121.2,705.0 1123.3,717.1 C1125.4,729.2 1130.3,743.1 1131.7,748.3" stroke-width="1.02"/>
<path d="M1129.6,758.8 C1129.6,765.7 1131.3,788.2 1129.6,800.4 C1127.9,812.5 1123.7,821.8 1119.2,831.7 C1114.7,841.6 1105.3,855.3 1102.5,860.0" stroke-width="1.10"/>
<path d="M1096.3,727.5 C1097.3,734.5 1101.8,755.3 1102.5,769.2 C1103.2,783.1 1102.5,798.6 1100.4,810.8 C1098.3,822.9 1091.7,836.9 1090.0,842.1" stroke-width="1.02"/>
<path d="M1117.1,760.8 C1118.1,765.7 1123.6,778.2 1123.3,790.0 C1123.0,801.8 1118.5,820.0 1115.0,831.7 C1111.5,843.4 1104.6,855.3 1102.5,860.0" stroke-width="0.94"/>
<path d="M1116.2,479.4 C1118.2,484.5 1125.1,499.7 1128.0,510.0 C1130.9,520.3 1132.8,535.8 1133.8,541.0" stroke-width="1.02"/>
<path d="M816.6,594.0 C816.8,597.9 816.8,609.0 817.6,617.5 C818.4,626.0 819.5,635.4 821.5,644.8 C823.5,654.2 826.4,665.0 829.3,674.1 C832.2,683.2 836.2,693.5 839.0,699.5 C841.8,705.5 839.4,707.4 845.9,710.3 C852.4,713.2 866.2,715.3 878.1,717.1 C890.0,718.9 904.2,720.5 917.2,721.0 C930.2,721.5 943.3,721.0 956.3,720.0 C969.3,719.0 982.3,718.0 995.3,715.2 C1008.3,712.4 1023.0,708.0 1034.4,703.4 C1045.8,698.8 1055.6,692.7 1063.7,687.8 C1071.8,682.9 1079.1,681.3 1083.2,674.1 C1087.3,666.9 1087.2,656.2 1088.1,644.8 C1089.0,633.4 1088.9,618.8 1088.7,605.8 C1088.5,592.8 1088.3,581.4 1087.1,566.7 C1085.9,552.1 1084.2,530.9 1081.3,517.9 C1078.4,504.9 1074.1,498.0 1069.5,488.6 C1064.9,479.2 1058.1,467.8 1053.9,461.3 C1049.7,454.8 1045.7,451.5 1044.1,449.5" stroke-width="1.36"/>
<path d="M898.3,721.2 C899.3,722.0 900.8,724.2 904.4,726.0 C908.0,727.8 914.9,729.9 920.0,732.0 C925.1,734.1 931.9,737.4 935.2,738.6 C938.5,739.8 938.5,740.7 940.0,739.3 C941.5,737.9 943.9,733.0 944.4,730.1 C944.9,727.2 943.2,723.3 943.0,721.9" stroke-width="1.36"/>
<path d="M905.1,721.2 L904.4,726.0" stroke-width="1.19"/>
<path d="M898.3,722.6 C896.5,724.8 888.9,732.7 887.3,735.5 C885.7,738.3 886.4,736.4 888.7,739.6 C891.0,742.8 896.7,750.6 901.0,754.7 C905.3,758.8 909.9,761.7 914.7,764.3 C919.5,766.9 927.2,769.4 929.7,770.4" stroke-width="1.36"/>
<path d="M935.2,740.3 C934.8,742.2 933.9,747.0 933.0,752.0 C932.1,757.0 930.2,767.3 929.7,770.4" stroke-width="1.44"/>
<path d="M942.0,739.3 C943.7,740.7 949.2,743.4 952.3,747.8 C955.4,752.2 959.1,762.6 960.5,765.6" stroke-width="1.44"/>
<path d="M946.8,722.6 C950.1,725.7 963.2,735.6 966.6,741.0 C970.0,746.4 968.5,750.2 967.3,754.7 C966.0,759.2 960.5,765.5 959.1,767.7" stroke-width="1.36"/>
<path d="M887.7,735.5 C882.5,737.2 866.3,741.5 856.7,745.6 C847.1,749.7 838.5,754.5 830.0,760.0 C821.5,765.5 809.8,775.3 805.7,778.4" stroke-width="1.36"/>
<path d="M805.7,778.4 C807.8,783.0 813.0,796.9 818.5,805.7 C824.0,814.5 830.9,824.5 838.5,831.2 C846.1,837.9 859.8,843.4 864.0,845.8" stroke-width="1.36"/>
<path d="M825.8,776.5 C828.2,780.4 834.9,791.8 840.0,800.0 C845.1,808.2 853.9,821.5 856.7,825.8" stroke-width="1.10"/>
<path d="M813.0,799.3 C809.0,802.8 799.0,810.1 789.3,820.3 C779.6,830.5 763.7,849.2 754.7,860.4 C745.7,871.6 738.7,883.2 735.5,887.7" stroke-width="1.36"/>
<path d="M735.5,887.7 C739.6,889.4 750.7,893.5 760.0,898.0 C769.3,902.5 785.9,912.2 791.1,915.0" stroke-width="1.36"/>
<path d="M791.1,915.0 C795.4,909.2 806.1,891.9 816.6,880.4 C827.1,868.9 847.8,851.6 854.0,845.8" stroke-width="1.36"/>
<path d="M754.7,860.4 L760.1,873.1" stroke-width="1.02"/>
<path d="M791.1,863.1 C793.4,861.9 800.0,858.3 805.0,856.0 C810.0,853.7 818.5,850.5 821.2,849.4" stroke-width="1.19"/>
<path d="M800.2,885.9 L820.3,881.3" stroke-width="1.02"/>
<path d="M793.9,900.5 L805.7,896.8" stroke-width="1.02"/>
<path d="M789.0,825.0 L782.0,845.0" stroke-width="0.85"/>
<path d="M889.5,794.8 C887.1,797.5 876.5,804.8 875.0,811.2 C873.5,817.6 880.1,825.1 880.4,833.0 C880.7,840.9 879.5,848.6 876.8,858.6 C874.1,868.6 868.6,880.5 864.0,893.2 C859.4,906.0 853.0,925.7 849.4,935.1 C845.8,944.5 843.4,947.3 842.2,949.7" stroke-width="1.27"/>
<path d="M842.2,949.7 C845.8,951.5 854.3,957.4 864.0,960.6 C873.7,963.8 886.2,967.6 900.5,968.8 C914.8,970.0 933.4,968.8 950.0,968.0 C966.6,967.2 988.3,966.4 1000.0,964.3 C1011.7,962.2 1016.8,956.7 1020.2,955.2" stroke-width="1.36"/>
<path d="M845.0,870.0 C845.5,873.3 846.8,884.2 848.0,890.0 C849.2,895.8 851.3,902.5 852.0,905.0" stroke-width="0.85"/>
<path d="M966.6,741.0 C969.3,744.4 979.1,753.5 983.0,761.5 C986.9,769.5 988.2,779.4 989.9,788.9 C991.5,798.4 992.1,810.2 992.9,818.5 C993.7,826.8 990.5,824.8 994.7,838.5 C999.0,852.2 1012.0,885.3 1018.4,900.5 C1024.8,915.7 1030.3,922.4 1033.0,929.7 C1035.7,937.0 1036.9,940.0 1034.8,944.2 C1032.7,948.5 1022.6,953.4 1020.2,955.2" stroke-width="1.27"/>
<path d="M966.6,741.0 C972.2,744.6 988.0,756.4 1000.0,762.9 C1012.0,769.4 1032.0,777.3 1038.4,780.2" stroke-width="1.36"/>
<path d="M1038.4,780.2 C1035.7,784.5 1029.6,796.6 1022.0,805.7 C1014.4,814.8 997.8,830.0 992.9,834.9" stroke-width="1.36"/>
<path d="M1014.7,780.2 C1012.8,783.5 1006.6,793.9 1003.0,800.0 C999.4,806.1 994.6,813.9 992.9,816.7" stroke-width="1.10"/>
<path d="M1025.7,799.3 C1032.2,804.4 1052.0,819.5 1065.0,830.0 C1078.0,840.5 1097.5,856.8 1104.0,862.2" stroke-width="1.36"/>
<path d="M1104.0,862.2 C1102.5,863.7 1098.9,867.3 1094.9,871.3 C1090.9,875.3 1084.8,880.2 1080.0,886.0 C1075.2,891.8 1068.2,902.7 1065.8,906.0" stroke-width="1.36"/>
<path d="M1065.8,906.0 C1064.0,907.2 1059.9,916.0 1054.8,913.3 C1049.7,910.6 1041.1,896.7 1035.0,890.0 C1028.9,883.3 1021.2,876.0 1018.4,873.2" stroke-width="1.27"/>
<path d="M1012.0,838.0 L1025.0,841.0" stroke-width="1.02"/>
<path d="M1046.0,815.0 L1049.4,837.9" stroke-width="0.85"/>
<path d="M1069.2,835.8 L1070.2,854.6" stroke-width="0.85"/>
<path d="M1060.0,870.0 L1045.0,875.0" stroke-width="0.85"/>
<path d="M1037.0,892.0 L1025.0,897.0" stroke-width="0.85"/>
<path d="M1093.0,899.0 C1094.2,900.2 1097.5,904.8 1100.0,906.0 C1102.5,907.2 1105.8,907.5 1108.0,906.5 C1110.2,905.5 1112.0,902.9 1113.0,900.0 C1114.0,897.1 1113.8,890.8 1114.0,889.0" stroke-width="1.19"/>
<path d="M736.4,889.5 C734.0,893.5 724.0,905.9 721.9,913.2 C719.8,920.5 720.4,927.7 723.7,933.3 C727.0,938.9 735.2,944.9 741.9,947.0 C748.6,949.1 759.5,948.0 763.8,946.0 C768.0,944.0 766.2,935.1 767.4,935.1 C768.6,935.1 768.0,944.5 771.1,946.0 C774.2,947.5 782.4,946.6 785.7,944.2 C789.0,941.8 790.1,936.4 791.1,931.5 C792.1,926.6 791.9,917.8 792.0,915.0" stroke-width="1.36"/>
<path d="M1093.1,871.3 C1096.4,873.1 1107.7,878.0 1113.2,882.3 C1118.7,886.6 1123.8,891.4 1125.9,896.9 C1128.0,902.4 1127.7,909.6 1125.9,915.1 C1124.1,920.6 1119.8,926.7 1115.0,929.7 C1110.2,932.7 1103.2,933.9 1096.8,933.3 C1090.4,932.7 1081.9,930.2 1076.7,926.0 C1071.5,921.8 1067.6,910.8 1065.8,907.8" stroke-width="1.36"/>
<path d="M858.7,962.7 L859.7,1038.2" stroke-width="1.36"/>
<path d="M1018.3,959.8 L1020.2,1032.5" stroke-width="1.36"/>
<path d="M859.7,1038.2 C865.7,1039.8 882.6,1045.9 895.5,1047.6 C908.4,1049.3 930.2,1048.4 937.1,1048.6" stroke-width="1.36"/>
<path d="M942.7,1042.0 C944.3,1042.9 944.3,1047.0 952.2,1047.6 C960.1,1048.2 978.6,1048.2 989.9,1045.7 C1001.2,1043.2 1015.2,1034.7 1020.2,1032.5" stroke-width="1.36"/>
<path d="M941.8,966.4 C941.0,971.4 937.3,985.9 937.1,996.6 C936.9,1007.3 940.5,1021.8 940.8,1030.6 C941.1,1039.4 939.3,1046.3 939.0,1049.5" stroke-width="1.27"/>
<path d="M838.9,947.6 L857.8,958.9" stroke-width="1.10"/>
<path d="M859.7,1038.2 C857.8,1043.9 852.7,1057.7 848.3,1072.2 C843.9,1086.7 837.0,1109.3 833.2,1125.0 C829.4,1140.7 826.8,1153.4 825.7,1166.6 C824.6,1179.8 825.0,1196.1 826.6,1204.3 C828.2,1212.5 828.3,1212.9 835.1,1215.7 C841.9,1218.5 857.1,1221.3 867.2,1221.3 C877.3,1221.3 889.5,1219.2 895.5,1215.7 C901.5,1212.2 902.5,1206.3 903.1,1200.6 C903.7,1194.9 899.9,1184.8 899.3,1181.7" stroke-width="1.36"/>
<path d="M896.0,1175.0 C896.5,1176.1 897.2,1187.8 899.3,1181.7 C901.4,1175.6 904.3,1154.7 908.7,1138.3 C913.1,1121.9 921.0,1098.3 925.7,1083.5 C930.4,1068.7 935.2,1055.2 937.1,1049.5" stroke-width="1.36"/>
<path d="M942.7,1042.0 C945.9,1048.6 956.2,1067.1 961.6,1081.6 C967.0,1096.1 971.3,1111.5 974.8,1128.8 C978.3,1146.1 981.1,1176.0 982.4,1185.5" stroke-width="1.36"/>
<path d="M993.7,1185.5 C991.9,1185.8 985.8,1184.6 983.0,1187.0 C980.2,1189.4 977.5,1195.8 976.7,1200.0 C975.9,1204.2 976.4,1208.8 978.0,1212.0 C979.6,1215.2 979.5,1218.6 986.2,1219.5 C992.9,1220.4 1008.2,1219.5 1018.3,1217.6 C1028.4,1215.7 1041.2,1213.4 1046.6,1208.1 C1051.9,1202.8 1051.0,1200.3 1050.4,1185.5 C1049.8,1170.7 1046.0,1139.9 1042.8,1119.4 C1039.6,1098.9 1034.7,1077.2 1031.5,1062.7 C1028.3,1048.2 1025.2,1037.5 1023.9,1032.5" stroke-width="1.36"/>
</g>
<!-- DRAWING END -->

<!-- bottom toolbar -->
<rect x="156" y="1424" width="1892" height="112" fill="#a2a2a2"/>
<rect x="156" y="1426" width="1892" height="110" fill="#777777"/>

<!-- ===== SLIDER ROW ===== -->
<g font-size="26.5" fill="#000" stroke="#fff" stroke-width="3" paint-order="stroke" stroke-linejoin="round">
  <text x="318.5" y="1390.8" textLength="85.5" lengthAdjust="spacingAndGlyphs">12.8px</text>
  <text x="1125.5" y="1391.2" textLength="74" lengthAdjust="spacingAndGlyphs">100%</text>
</g>
<g filter="url(#halo)">
  <circle cx="440.1" cy="1381.8" r="24" fill="#0f0f0f"/>
  <circle cx="1054" cy="1381.8" r="24" fill="#0f0f0f"/>
  <circle cx="1235.4" cy="1381.8" r="24" fill="#0f0f0f"/>
  <circle cx="1878" cy="1381.8" r="24" fill="#0f0f0f"/>
</g>
<g fill="#fff">
  <rect x="430" y="1380.5" width="20.2" height="3"/>
  <rect x="1225.3" y="1380.5" width="20.2" height="3"/>
  <rect x="1043.9" y="1380.5" width="20.2" height="3"/>
  <rect x="1052.5" y="1371.7" width="3" height="20.2"/>
  <rect x="1867.9" y="1380.5" width="20.2" height="3"/>
  <rect x="1876.5" y="1371.7" width="3" height="20.2"/>
</g>
<rect x="495.3" y="1373.9" width="502.7" height="15.9" rx="7.95" fill="#a8a8a8"/>
<path d="M503.25,1373.9 L632,1373.9 L632,1389.8 L503.25,1389.8 A7.95,7.95 0 0 1 503.25,1373.9 Z" fill="#234a77"/>
<g>
  <path d="M1295,1373.9 L1830,1373.9 L1830,1389.8 L1295,1389.8 A7.95,7.95 0 0 1 1295,1373.9 Z" fill="#ffffff"/>
  <clipPath id="trkclip"><path d="M1295,1373.9 L1830,1373.9 L1830,1389.8 L1295,1389.8 A7.95,7.95 0 0 1 1295,1373.9 Z"/></clipPath>
  <rect x="1280" y="1376" width="560" height="12" fill="url(#checker)" clip-path="url(#trkclip)"/>
  <path d="M1295,1373.9 L1830,1373.9 L1830,1389.8 L1295,1389.8 A7.95,7.95 0 0 1 1295,1373.9 Z" fill="url(#opgrad)"/>
</g>
<g filter="url(#tshadow)">
  <circle cx="630" cy="1382" r="24" fill="#fff"/>
  <circle cx="1809.2" cy="1382" r="24" fill="#fff"/>
</g>

<!-- ===== BOTTOM TOOLBAR ICONS ===== -->
<g fill="#fff">
  <!-- swap: small brush -->
  <g transform="translate(296.6,1481.2) rotate(-45)">
    <path d="M0,0 C1,-4.5 6,-4.2 10.5,-3 L10.5,3 C6,3.8 3,2.8 0,0 Z"/>
    <rect x="11.8" y="-3" width="4.5" height="6"/>
    <path d="M17.6,-3 L31,-3 A3,3 0 0 1 31,3 L17.6,3 Z"/>
  </g>
  <!-- swap: eraser -->
  <path d="M338.6,1482.2 L348,1491.2 L334.4,1504.4 L325.4,1495.4 Z"/>
  <path d="M324,1497 L332.6,1505.6 L329.6,1508.6 L321,1500 Z"/>
</g>
<g fill="none" stroke="#fff" stroke-width="2.2">
  <path d="M328.4,1463.4 L339.4,1463.4 L339.4,1473.2"/>
  <path d="M334,1467.8 L339.4,1473.4 L345.2,1467.8"/>
  <path d="M303.4,1491 L303.4,1500.2 L315.9,1500.2"/>
  <path d="M298.2,1495.8 L303.4,1490.4 L309.2,1495.8"/>
</g>
<!-- brush preview -->
<clipPath id="bpclip"><circle cx="544" cy="1482" r="35.5"/></clipPath>
<g clip-path="url(#bpclip)">
  <rect x="500" y="1440" width="90" height="90" fill="url(#bpcheck)"/>
  <rect x="500" y="1440" width="90" height="90" filter="url(#noise2)" opacity="0.7"/>
</g>
<circle cx="544" cy="1482" r="35.6" fill="none" stroke="#f0f0f0" stroke-width="1.8"/>
<text x="522.2" y="1505.3" font-size="27" fill="#000" stroke="#fff" stroke-width="4" paint-order="stroke" stroke-linejoin="round" textLength="51.8" lengthAdjust="spacingAndGlyphs">12.8</text>
<!-- color swatch -->
<rect x="734.4" y="1450.8" width="62.8" height="62.2" fill="#000" stroke="#fff" stroke-width="1.6"/>
<!-- down arrow -->
<g fill="none" stroke="#fff" stroke-width="2.3">
  <path d="M988,1455.6 L988,1507"/>
  <path d="M965.8,1485.6 L988,1507.8 L1010.3,1485.6"/>
</g>
<!-- undo -->
<g fill="none" stroke="#fff" stroke-width="2.3">
  <path d="M1198.6,1464.2 L1188.2,1474.7 L1198.6,1485.3"/>
  <path d="M1188.2,1474.7 L1218.1,1474.7 A12.35,12.35 0 0 1 1218.1,1499.4 L1200.2,1499.4"/>
</g>
<!-- redo (disabled) -->
<g fill="none" stroke="#9c9c9c" stroke-width="2.3" transform="translate(2641.25,0) scale(-1,1)">
  <path d="M1198.6,1464.2 L1188.2,1474.7 L1198.6,1485.3"/>
  <path d="M1188.2,1474.7 L1218.1,1474.7 A12.35,12.35 0 0 1 1218.1,1499.4 L1200.2,1499.4"/>
</g>
<!-- layers -->
<rect x="1642" y="1468" width="40" height="40" fill="#fff"/>
<rect x="1634" y="1460" width="44" height="44" fill="#777777"/>
<rect x="1636" y="1462" width="40" height="40" fill="#fff"/>
<rect x="1628" y="1453.6" width="44" height="44.4" fill="#777777"/>
<rect x="1630" y="1455.6" width="40" height="40.4" fill="#fff"/>
<text x="1651.5" y="1485" font-size="23" font-weight="bold" fill="#000" text-anchor="middle">3</text>
<!-- back arrow -->
<g fill="none" stroke="#fff" stroke-width="2.4">
  <path d="M1875.8,1460 L1853.9,1481.9 L1875.8,1503.8"/>
  <path d="M1854.2,1481.9 L1906,1481.9"/>
</g>

</svg>
</body></html>
